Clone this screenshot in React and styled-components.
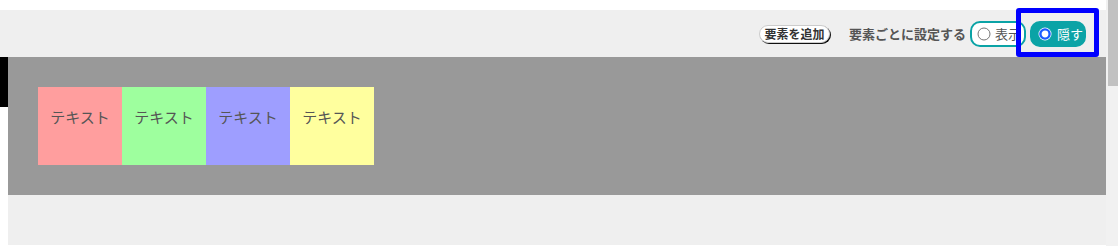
import React from "react";
import styled, { createGlobalStyle } from "styled-components";

const Global = createGlobalStyle`
  html, body { margin: 0; padding: 0; background: #fff; }
  body { font-family: "Noto Sans CJK JP", "Noto Sans", sans-serif; overflow: hidden; }
`;

const Page = styled.div`
  display: flex;
  width: 1118px;
  height: 246px;
  background: #fff;
`;

const Main = styled.div`
  flex: 1;
  display: flex;
  flex-direction: column;
  padding-top: 10px;
`;

const Scrollbar = styled.div`
  width: 12px;
  background: #f1f1f1;
  display: flex;
  justify-content: flex-end;
`;

const Thumb = styled.div`
  width: 10px;
  height: 86px;
  background: #c1c1c1;
`;

const Toolbar = styled.div`
  height: 47px;
  background: #efefef;
  display: flex;
  align-items: center;
  justify-content: flex-end;
  padding-right: 20px;
`;

const AddButton = styled.button`
  height: 18px;
  width: 71px;
  padding: 0;
  margin-right: 19px;
  border: 1px solid #ccc;
  border-radius: 9px;
  background: #fff;
  box-shadow: 1px 1px 0 #111;
  font-family: inherit;
  font-size: 12px;
  font-weight: 700;
  color: #333;
  line-height: 16px;
  display: flex;
  align-items: center;
  justify-content: center;
`;

const Label = styled.span`
  font-size: 13px;
  font-weight: 700;
  color: #555;
`;

const Choice = styled.label`
  position: relative;
  box-sizing: border-box;
  width: 56px;
  height: 26px;
  border-radius: 10px;
  border: 2px solid #0ba3a6;
  background: ${(p) => (p.$checked ? "#0ba3a6" : "#fff")};
  color: ${(p) => (p.$checked ? "#fff" : "#555")};
  display: flex;
  align-items: center;
  gap: ${(p) => (p.$checked ? "5px" : "4px")};
  padding-left: ${(p) => (p.$checked ? "6px" : "5px")};
  font-size: 13px;
  white-space: nowrap;
  margin-left: 4px;
`;

const ClipText = styled.span`
  display: inline-block;
  overflow: hidden;
  max-width: ${(p) => (p.$max ? p.$max : "none")};
`;

const Highlight = styled.div`
  position: absolute;
  left: -16px;
  top: -15px;
  right: -15px;
  bottom: -12px;
  border: 5px solid #0000ff;
  border-radius: 3px;
  pointer-events: none;
`;

const Body = styled.div`
  display: flex;
  flex: 1;
`;

const SideMark = styled.div`
  width: 8px;
  height: 50px;
  background: #000;
`;

const Content = styled.div`
  flex: 1;
  display: flex;
  flex-direction: column;
`;

const Panel = styled.div`
  background: #999;
  padding: 30px;
  display: flex;
`;

const Item = styled.div`
  width: 84px;
  height: 78px;
  box-sizing: border-box;
  background: ${(p) => p.$bg};
  color: #555;
  font-size: 15px;
  text-align: center;
  padding-top: 18px;
  line-height: 24px;
`;

const Footer = styled.div`
  height: 50px;
  background: #efefef;
`;

const Radio = ({ checked }) =>
  checked ? (
    <svg width="14" height="14" viewBox="0 0 14 14">
      <circle cx="7" cy="7" r="6.5" fill="#fff" />
      <circle cx="7" cy="7" r="4.6" fill="#fff" stroke="#1a5cff" strokeWidth="2.4" />
    </svg>
  ) : (
    <svg width="14" height="14" viewBox="0 0 14 14">
      <circle cx="7" cy="7" r="6" fill="#fff" stroke="#767676" strokeWidth="1" />
    </svg>
  );

const items = [
  { bg: "#ff9e9e" },
  { bg: "#9eff9e" },
  { bg: "#9e9eff" },
  { bg: "#ffff9e" },
];

export default function App() {
  return (
    <>
      <Global />
      <Page>
        <Main>
          <Toolbar>
            <AddButton>要素を追加</AddButton>
            <Label>要素ごとに設定する</Label>
            <Choice>
              <Radio />
              <ClipText $max="27px">表示</ClipText>
            </Choice>
            <Choice $checked>
              <Radio checked />
              <span>隠す</span>
              <Highlight />
            </Choice>
          </Toolbar>
          <Body>
            <SideMark />
            <Content>
              <Panel>
                {items.map((it, i) => (
                  <Item key={i} $bg={it.bg}>
                    テキスト
                  </Item>
                ))}
              </Panel>
              <Footer />
            </Content>
          </Body>
        </Main>
        <Scrollbar>
          <Thumb />
        </Scrollbar>
      </Page>
    </>
  );
}
